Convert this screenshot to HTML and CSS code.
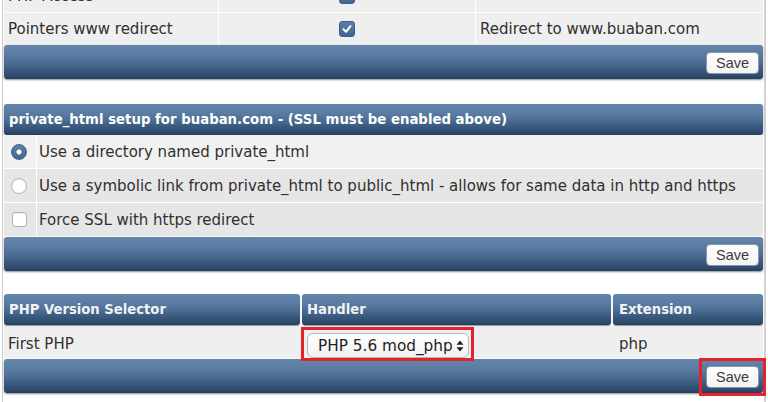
FILE: index.html
```html
<!DOCTYPE html>
<html>
<head>
<meta charset="utf-8">
<link rel="stylesheet" href="styles.css">
</head>
<body>
<div class="page">
  <div class="opts">
    <div class="orow cut">
      <div class="cell label">PHP Access</div>
      <div class="cell mid"><span class="cb checked"><svg viewBox="0 0 16 16" width="16" height="16"><path d="M4.5 8.3 L7 10.8 L11.5 5.2" fill="none" stroke="#fff" stroke-width="2" stroke-linecap="round" stroke-linejoin="round"/></svg></span></div>
      <div class="cell"></div>
    </div>
    <div class="orow">
      <div class="cell label">Pointers www redirect</div>
      <div class="cell mid"><span class="cb checked"><svg viewBox="0 0 16 16" width="16" height="16"><path d="M4.5 8.3 L7 10.8 L11.5 5.2" fill="none" stroke="#fff" stroke-width="2" stroke-linecap="round" stroke-linejoin="round"/></svg></span></div>
      <div class="cell">Redirect to www.buaban.com</div>
    </div>
  </div>
  <div class="bar"><button class="save">Save</button></div>

  <div class="section">
    <div class="bar head">private_html setup for buaban.com - (SSL must be enabled above)</div>
    <div class="rrow light">
      <div class="ctl"><span class="radio on"></span></div>
      <div class="txt">Use a directory named private_html</div>
    </div>
    <div class="rrow">
      <div class="ctl"><span class="radio"></span></div>
      <div class="txt">Use a symbolic link from private_html to public_html - allows for same data in http and https</div>
    </div>
    <div class="rrow">
      <div class="ctl"><span class="cb plain"></span></div>
      <div class="txt">Force SSL with https redirect</div>
    </div>
    <div class="bar"><button class="save">Save</button></div>
  </div>

  <div class="section php">
    <div class="pgrid heads">
      <div class="hcell">PHP Version Selector</div>
      <div class="hcell">Handler</div>
      <div class="hcell ext">Extension</div>
    </div>
    <div class="pgrid data">
      <div class="dcell">First PHP</div>
      <div class="dcell sel">
        <span class="redbox">
          <span class="select">PHP 5.6 mod_php<svg class="arrows" viewBox="0 0 8 12" width="8" height="12"><path d="M4 0.5 L7.5 4.8 L0.5 4.8 Z M4 11.5 L7.5 7.2 L0.5 7.2 Z" fill="#222"/></svg></span>
        </span>
      </div>
      <div class="dcell ext">php</div>
    </div>
    <div class="bar"><span class="redbox savebox"><button class="save">Save</button></span></div>
  </div>
</div>
</body>
</html>
```

FILE: styles.css
```css
html, body {
  margin: 0;
  padding: 0;
  background: #fff;
  overflow: hidden;
}
body {
  font-family: "DejaVu Sans", Verdana, sans-serif;
  font-size: 15px;
  color: #303030;
}
.page {
  display: flow-root;
  margin-left: 2px;
  width: 759px;
  min-height: 402px;
  padding: 0 1px;
  border-left: 1px solid #c9c9c9;
  border-right: 2px solid #d2d2d2;
}

/* top options table */
.opts {
  margin-top: -20px;
}
.orow {
  display: grid;
  grid-template-columns: 215px 257px 1fr;
  height: 32px;
  border-bottom: 1px solid #fff;
  background: #efefef;
}
.orow:last-child {
  border-bottom: none;
}
.cell {
  display: flex;
  align-items: center;
  padding-left: 4px;
  border-right: 1px solid #fff;
  white-space: nowrap;
}
.cell:last-child {
  border-right: none;
}
.cell.mid {
  justify-content: center;
  padding-left: 0;
}

/* checkboxes and radios */
.cb {
  display: inline-block;
  box-sizing: border-box;
  border-radius: 3px;
}
.cb.checked {
  width: 16px;
  height: 16px;
  background: linear-gradient(#5a7fab, #42668f);
  border: 1px solid #3c5f88;
  position: relative;
}
.cb.checked svg {
  position: absolute;
  left: -1px;
  top: -1px;
}
.cb.plain {
  width: 15px;
  height: 15px;
  background: #fff;
  border: 1px solid #b3b3b3;
  box-shadow: inset 0 1px 1px rgba(0,0,0,0.08);
}
.radio {
  display: inline-block;
  box-sizing: border-box;
  width: 16px;
  height: 16px;
  border-radius: 50%;
  background: #fff;
  border: 1px solid #b5b5b5;
  box-shadow: inset 0 1px 1px rgba(0,0,0,0.08);
}
.radio.on {
  background: radial-gradient(circle, #fff 0 2.3px, transparent 2.8px), linear-gradient(#5c81ad, #42678f);
  border-color: #3e628b;
  box-shadow: none;
}

/* blue bars */
.bar {
  display: flex;
  align-items: center;
  justify-content: flex-end;
  box-sizing: border-box;
  height: 34px;
  padding-right: 4px;
  border-radius: 3px;
  background: linear-gradient(to bottom, #6384ab 0%, #5a7ca3 30%, #4d6f96 50%, #3a5a80 72%, #2d4a6d 92%, #223b5a 100%);
  box-shadow: 0 1px 2px rgba(0,0,0,0.45);
}
.bar.head {
  justify-content: flex-start;
  height: 31px;
  padding-left: 5px;
  color: #fff;
  font-weight: bold;
  font-size: 13.3px;
  white-space: nowrap;
}
.save {
  box-sizing: border-box;
  width: 53px;
  height: 22px;
  margin-top: 2px;
  padding: 0;
  border: 1px solid #8a98a8;
  border-radius: 4px;
  background: linear-gradient(#ffffff, #f3f3f3);
  font-family: "Liberation Sans", Arial, sans-serif;
  font-size: 14.5px;
  color: #3a3a3a;
}

/* sections */
.section {
  margin-top: 25px;
}
.rrow {
  display: grid;
  grid-template-columns: 33px 1fr;
  height: 33px;
  background: #e6e6e6;
  border-bottom: 1px solid #fff;
}
.rrow.light {
  background: #f1f1f1;
}
.ctl {
  display: flex;
  align-items: center;
  padding-left: 7px;
  border-right: 1px solid #fff;
}
.ctl .cb.plain {
  margin-left: 1px;
}
.txt {
  display: flex;
  align-items: center;
  padding-left: 2px;
  white-space: nowrap;
}

/* php section */
.section.php {
  margin-top: 23px;
}
.pgrid {
  display: grid;
  grid-template-columns: 296px 309px 1fr;
  column-gap: 2px;
}
.hcell {
  display: flex;
  align-items: center;
  height: 31px;
  padding-left: 5px;
  border-radius: 3px;
  background: linear-gradient(to bottom, #6384ab 0%, #5a7ca3 30%, #4d6f96 50%, #3a5a80 72%, #2d4a6d 92%, #223b5a 100%);
  box-shadow: 0 1px 1px rgba(0,0,0,0.4);
  color: #f2f2f2;
  font-weight: bold;
  font-size: 13.2px;
  white-space: nowrap;
}
.hcell.ext, .dcell.ext {
  padding-left: 6px;
}
.pgrid.data {
  height: 32px;
  margin-top: 1px;
  background: #efefef;
}
.dcell {
  display: flex;
  align-items: center;
  padding-left: 4px;
  white-space: nowrap;
}
.dcell.sel {
  padding-left: 0;
}
.redbox {
  display: inline-flex;
  border: 3px solid #e2232a;
}
.dcell.sel .redbox {
  margin: 1px 0 0 -1px;
  padding: 3px 2px 0 3px;
  height: 25px;
}
.select {
  display: flex;
  align-items: center;
  box-sizing: border-box;
  width: 162px;
  height: 25px;
  padding-left: 10px;
  border: 1px solid #b8b8b8;
  border-radius: 6px;
  background: linear-gradient(#ffffff, #f1f1f1);
  color: #222;
  font-size: 15.3px;
  white-space: nowrap;
}
.arrows {
  margin-left: 3px;
}
.php .bar {
  margin-top: 1px;
}
.savebox {
  margin-right: -7px;
  margin-top: 2px;
  padding: 5px 4px 5px 4px;
}
.savebox .save {
  margin-top: 0;
}
```
